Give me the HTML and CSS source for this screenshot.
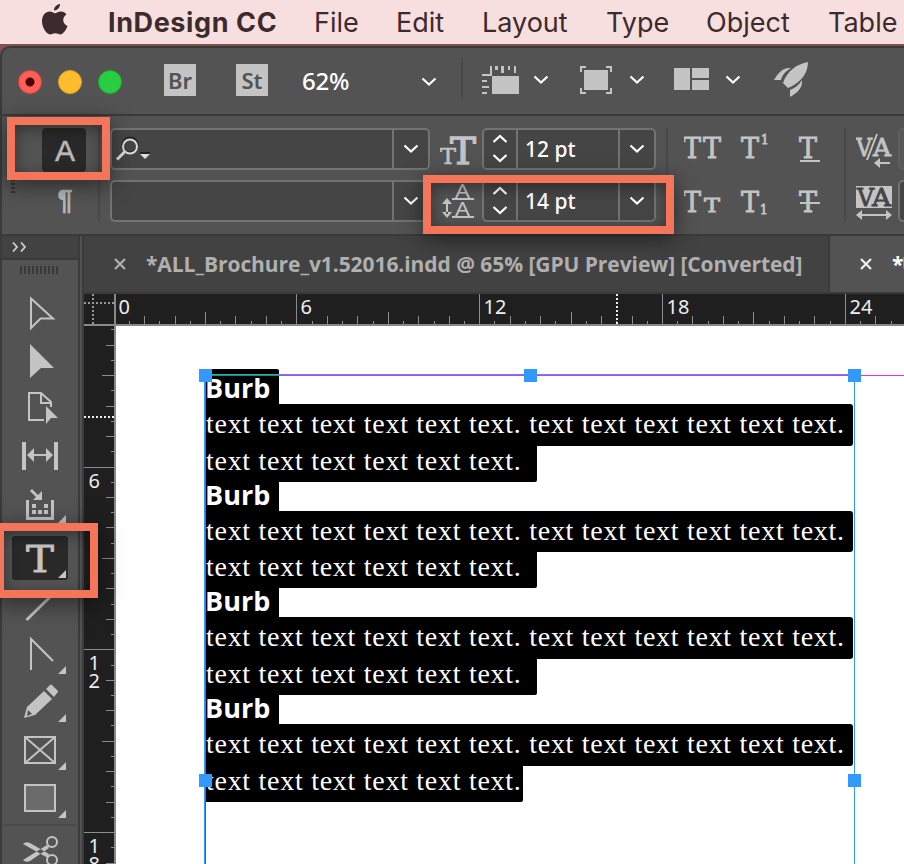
FILE: index.html
```html
<!DOCTYPE html>
<html lang="en">
<head>
    <meta charset="UTF-8">
    <title>InDesign CC</title>
    <link rel="stylesheet" href="styles.css">
</head>
<body>
    <div class="menubar">
        <svg class="apple" width="28" height="34" viewBox="0 0 28 34">
            <path d="M19 1c.3 3-2.800 6.500-6 6.500C12.600 4.500 15.800 1.300 19 1z"/>
            <path d="M14 10.300c1.600 0 3.200-1.700 6-1.700 2.300 0 4.300 1.200 5.500 3-4.900 2.900-4 9.600 1 11.500-1.300 3.600-4.200 8.300-6.900 8.300-2 0-2.800-1.200-5.200-1.200s-3.300 1.200-5.200 1.200C5.700 31.400 1 24.700 1 18.300c0-6 3.600-9.700 7.700-9.700 2.500 0 4 1.700 5.300 1.700z"/>
        </svg>
        <span class="menu app-name">InDesign CC</span>
        <span class="menu file">File</span>
        <span class="menu edit">Edit</span>
        <span class="menu layout">Layout</span>
        <span class="menu type">Type</span>
        <span class="menu object">Object</span>
        <span class="menu table">Table</span>
    </div>

    <div class="desktop">
    <div class="window">
        <div class="appbar">
            <div class="lights">
                <span class="light red"></span>
                <span class="light yellow"></span>
                <span class="light green"></span>
            </div>
            <span class="badge">Br</span>
            <span class="badge">St</span>
            <span class="zoom">62%</span>
            <svg class="chev" width="16" height="10" viewBox="0 0 16 10"><path d="M1.500 1.500L8 7.500l6.500-6"/></svg>
            <span class="sep"></span>
            <svg class="icon rulers" width="37" height="28" viewBox="0 0 37 28">
                <path d="M10 10h27v18H10zM8 0h2v10H0V8h8zM13 0h3v4h-3zM19 0h3v7h-3zM26 0h2v4h-2zM32 0h2v7h-2zM0 14h5v2H0zM0 20h7v2H0zM0 26h5v2H0z"/>
            </svg>
            <svg class="chev" width="16" height="10" viewBox="0 0 16 10"><path d="M1.500 1.500L8 7.500l6.500-6"/></svg>
            <svg class="icon screen" width="33" height="28" viewBox="0 0 33 28">
                <path d="M4 4h24v20H4zM0 0h6v2H2v4H0zM26 0h6v6h-2V2h-4zM0 22h2v4h4v2H0zM30 22h2v6h-6v-2h4z"/>
            </svg>
            <svg class="chev" width="16" height="10" viewBox="0 0 16 10"><path d="M1.500 1.500L8 7.500l6.500-6"/></svg>
            <svg class="icon arrange" width="35" height="22" viewBox="0 0 35 22">
                <path d="M0 0h16v22H0zM18 0h17v10H18zM18 12h17v10H18z"/>
            </svg>
            <svg class="chev" width="16" height="10" viewBox="0 0 16 10"><path d="M1.500 1.500L8 7.500l6.500-6"/></svg>
            <svg class="icon rocket" width="35" height="35" viewBox="0 0 35 35">
                <path d="M34 0C23 2 13 9 9 21l5 5C26 21 34 12 34 0zM17 6C9 5 4 11 0 18h7c1-5 5-9 10-12zM28 18c-3 5-7 8-12 10v7c7-4 13-9 12-17z"/>
            </svg>
        </div>

        <div class="control">
            <div class="modes">
                <span class="grip"></span>
                <div class="mode-list">
                    <span class="mode on">A</span>
                    <span class="mode para">¶</span>
                </div>
            </div>
            <span class="line"></span>
            <div class="fonts">
                <div class="field">
                    <svg width="38" height="28" viewBox="0 0 38 28">
                        <g fill="none" stroke="#222"><circle cx="15" cy="9" r="7.500" stroke-width="2"/></g>
                        <g fill="none" stroke="#ddd"><circle cx="15" cy="10.500" r="7" stroke-width="2"/><path d="M9.500 16L2 23.500" stroke-width="3"/></g>
                        <path d="M25 16h10v2H25z" fill="#222"/><path d="M25 18h10l-5 5z" fill="#ddd"/>
                    </svg>
                    <span class="drop"><svg class="chev" width="16" height="10" viewBox="0 0 16 10"><path d="M1.500 1.500L8 7.500l6.500-6"/></svg></span>
                </div>
                <div class="field">
                    <span class="drop"><svg class="chev" width="16" height="10" viewBox="0 0 16 10"><path d="M1.500 1.500L8 7.500l6.500-6"/></svg></span>
                </div>
            </div>
            <div class="sizes">
                <div class="size-row">
                    <svg class="glyph" width="38" height="42" viewBox="0 0 38 42">
                        <text x="0" y="36" font-size="22" textLength="16" lengthAdjust="spacingAndGlyphs" stroke-width=".5">T</text>
                        <text x="10" y="36" font-size="38" textLength="26" lengthAdjust="spacingAndGlyphs" stroke-width="1.300">T</text>
                    </svg>
                    <div class="field">
                        <span class="spin">
                            <svg class="chev" width="16" height="10" viewBox="0 0 16 10"><path d="M1.500 8L8 2l6.500 6"/></svg>
                            <svg class="chev" width="16" height="10" viewBox="0 0 16 10"><path d="M1.500 2L8 8l6.500-6"/></svg>
                        </span>
                        <span class="value">12 pt</span>
                        <span class="drop"><svg class="chev" width="16" height="10" viewBox="0 0 16 10"><path d="M1.500 1.500L8 7.500l6.500-6"/></svg></span>
                    </div>
                </div>
                <div class="size-row">
                    <svg class="glyph sans" width="38" height="42" viewBox="0 0 38 42">
                        <text x="15" y="18" font-size="20" textLength="15" lengthAdjust="spacingAndGlyphs">A</text>
                        <text x="15" y="36" font-size="20" textLength="15" lengthAdjust="spacingAndGlyphs">A</text>
                        <path d="M12 18h22v2H12zM12 36h22v2H12zM6 22h2v12H6zM7 18l5 6H2zM7 38l5-6H2z"/>
                    </svg>
                    <div class="field">
                        <span class="spin">
                            <svg class="chev" width="16" height="10" viewBox="0 0 16 10"><path d="M1.500 8L8 2l6.500 6"/></svg>
                            <svg class="chev" width="16" height="10" viewBox="0 0 16 10"><path d="M1.500 2L8 8l6.500-6"/></svg>
                        </span>
                        <span class="value">14 pt</span>
                        <span class="drop"><svg class="chev" width="16" height="10" viewBox="0 0 16 10"><path d="M1.500 1.500L8 7.500l6.500-6"/></svg></span>
                    </div>
                </div>
            </div>
            <span class="line"></span>
            <svg class="glyph case" width="138" height="94" viewBox="0 0 138 94">
                <text x="-1" y="30" font-size="27">T</text><text x="19" y="30" font-size="27">T</text>
                <text x="57" y="30" font-size="27">T</text><text x="77" y="16" font-size="12">1</text>
                <text x="115" y="30" font-size="27">T</text>
                <text x="-1" y="84" font-size="27">T</text><text x="20" y="84" font-size="19" textLength="16" lengthAdjust="spacingAndGlyphs">T</text>
                <text x="57" y="84" font-size="27">T</text><text x="76" y="86" font-size="12">1</text>
                <text x="115" y="84" font-size="27">T</text>
                <path d="M116 32h20v2h-20zM116 74h20v2h-20z"/>
            </svg>
            <span class="line"></span>
            <svg class="glyph kern" width="38" height="94" viewBox="0 0 38 94">
                <text x="0" y="28" font-size="25" textLength="16" lengthAdjust="spacingAndGlyphs">V</text>
                <text x="17" y="28" font-size="25" textLength="18" lengthAdjust="spacingAndGlyphs">A</text>
                <path d="M20 6h2L12 32h-2zM18 35l6-5v4h10v2H24v4z"/>
                <path d="M0 58h36v22H0zM0 87l6-5v4h24v-4l6 5-6 5v-4H6v4z"/>
                <g class="dark">
                    <text x="1" y="78" font-size="25" textLength="17" lengthAdjust="spacingAndGlyphs">V</text>
                    <text x="16" y="78" font-size="25" textLength="19" lengthAdjust="spacingAndGlyphs">A</text>
                </g>
            </svg>
            <div class="fonts last">
                <div class="field dim"></div>
                <div class="field"></div>
            </div>
        </div>

        <div class="main">
            <div class="tools">
                <div class="tools-head">
                    <svg width="14" height="10" viewBox="0 0 14 10"><path d="M1 .5l4 4.500-4 4.500M9 .5l4 4.500-4 4.500" fill="none" stroke="#ccc" stroke-width="1.800"/></svg>
                </div>
                <div class="tools-grip"></div>
                <svg class="tool" viewBox="0 0 76 48"><path class="o" d="M29 9.500V39l9.500-9.500H51z"/></svg>
                <svg class="tool" viewBox="0 0 76 48"><path d="M28 7v34l11-10h13z"/></svg>
                <svg class="tool" viewBox="0 0 76 48"><path class="o" d="M42 35H27V8h12l10 9v5M39 8v10h10"/><path d="M44 21v18l5-6h7z"/></svg>
                <svg class="tool" viewBox="0 0 76 48"><path d="M20 9h4v28h-4zM52 9h4v28h-4zM25 22l7-7v6h12v-6l7 7-7 7v-6H32v6z"/></svg>
                <svg class="tool" viewBox="0 0 76 48"><path d="M24 19h3v17h22V19h3v20H24zM30 23h4v4h-4zM42 23h4v4h-4zM30 29h4v4h-4zM36 29h4v4h-4zM42 29h4v4h-4zM30 8l6 6 4-4v9h-9l3-3-6-6zM64 34v8h-8z"/></svg>
                <div class="tools-gap"></div>
                <svg class="tool glyph" viewBox="0 0 76 48">
                    <rect x="10" y="2" width="56" height="44" rx="3" fill="#292929"/>
                    <text x="24" y="38" font-size="38" textLength="28" lengthAdjust="spacingAndGlyphs" stroke-width=".8">T</text>
                    <path d="M64 36v8h-8z"/>
                </svg>
                <svg class="tool" viewBox="0 0 76 48"><path class="o thick" d="M24.500 38L49 14"/></svg>
                <svg class="tool" viewBox="0 0 76 48"><path class="o" d="M29 40V9l22 22"/><path d="M64 36v8h-8z"/></svg>
                <svg class="tool" viewBox="0 0 76 48"><path d="M22 40l3-11 17-16 8 8-17 16zM44 11l4-4q1-1 2 0l5.500 5.500q1 1 0 2L52 19zM64 36v8h-8z"/><path d="M26 32l-1 6 5-2z" fill="#535353"/></svg>
                <svg class="tool" viewBox="0 0 76 48"><path class="o" d="M23 11h30v26H23zM23 11l30 26M53 11L23 37"/><path d="M64 36v8h-8z"/></svg>
                <svg class="tool" viewBox="0 0 76 48"><path class="o box" d="M23 11h30v26H23z"/><path d="M64 36v8h-8z"/></svg>
                <div class="tools-line"></div>
                <svg class="tool" viewBox="0 0 76 48"><g class="o"><circle cx="50" cy="14" r="5"/><circle cx="50" cy="32" r="5"/></g><path d="M21 16q3-3 7-1l19 11-1 4zM21 32q3 3 7 1l19-13-2-3z"/></svg>
            </div>

            <div class="doc">
                <div class="tabs">
                    <div class="tab">
                        <svg width="12" height="12" viewBox="0 0 12 12"><path d="M1 1l10 10M11 1L1 11"/></svg>
                        <span class="tab-title">*ALL_Brochure_v1.52016.indd @ 65% [GPU Preview] [Converted]</span>
                    </div>
                    <div class="tab active">
                        <svg width="12" height="12" viewBox="0 0 12 12"><path d="M1 1l10 10M11 1L1 11"/></svg>
                        <span class="tab-title">*U</span>
                    </div>
                </div>
                <div class="sheet">
                    <svg class="corner" width="30" height="30" viewBox="0 0 30 30"><path d="M9 0v30M0 9h30"/></svg>
                    <svg class="ruler h" id="rulerH" width="788" height="30"></svg>
                    <svg class="ruler v" id="rulerV" width="30" height="538"></svg>
                    <div class="page">
                        <div class="story">
                            <p class="sel head first">Burb</p>
                            <p class="sel full">text text text text text text. text text text text text text.</p>
                            <p class="sel rest">text text text text text text.</p>
                            <p class="sel head">Burb</p>
                            <p class="sel full">text text text text text text. text text text text text text.</p>
                            <p class="sel rest">text text text text text text.</p>
                            <p class="sel head">Burb</p>
                            <p class="sel full">text text text text text text. text text text text text text.</p>
                            <p class="sel rest">text text text text text text.</p>
                            <p class="sel head">Burb</p>
                            <p class="sel full">text text text text text text. text text text text text text.</p>
                            <p class="sel rest end">text text text text text text.</p>
                        </div>
                        <!-- text frame outline and handles over the story -->
                        <svg class="frame" width="788" height="538" viewBox="116 326 788 538" shape-rendering="crispEdges">
                            <path fill="#ee2fe6" d="M205 375h699v1H205z"/>
                            <path fill="#8a2be2" d="M205 800h1v64h-1z"/>
                            <path fill="#11a52a" d="M205 375h74v1h-74zM205 375h1v426h-1z"/>
                            <path fill="#3399ff" d="M204 374h651v1H204zM204 374h1v490h-1zM854 374h1v490h-1z"/>
                            <path fill="#3399ff" d="M199 369h13v13h-13zM524 369h13v13h-13zM848 369h13v13h-13zM199 774h13v13h-13zM848 774h13v13h-13z"/>
                        </svg>
                    </div>
                </div>
            </div>
        </div>
    </div>
    </div>

    <div class="callout character"></div>
    <div class="callout leading"></div>
    <div class="callout type-tool"></div>

    <script>
        const STEP = 182.8 / 12;

        function tickLength(i) {
            if (i % 12 === 0) return 30;
            if (i % 6 === 0) return 12;
            return i % 2 === 0 ? 8 : 3;
        }

        // start is the offset of the zero mark from the start of the ruler
        function drawRuler(id, start, size, vertical, marker) {
            let out = "";
            for (let i = 0; i < 60; i++) {
                const p = Math.floor(start + i * STEP);
                if (p < -5 || p > size) continue;
                const len = tickLength(i);
                if (vertical) {
                    out += `<rect x="${30 - len}" y="${p}" width="${len}" height="1"/>`;
                } else {
                    out += `<rect x="${p}" y="${30 - len}" width="1" height="${len}"/>`;
                }
                if (i % 12 === 0) {
                    const label = String(i / 2);
                    if (vertical) {
                        label.split("").forEach((c, n) => {
                            out += `<text x="4.500" y="${p + 21 + n * 18}">${c}</text>`;
                        });
                    } else {
                        out += `<text x="${p + 4.5}" y="20">${label}</text>`;
                    }
                }
            }
            out += vertical ? `<path d="M0 ${marker}h30"/>` : `<path d="M${marker} 0v30"/>`;
            document.getElementById(id).innerHTML = out;
        }

        drawRuler("rulerH", -1.9, 788, false, 501);
        drawRuler("rulerV", -41.8, 538, true, 91);
    </script>
</body>
</html>
```
FILE: styles.css
```css
*{
    margin: 0;
    padding: 0;
    box-sizing: border-box;
}
body{
    width: 904px;
    height: 864px;
    overflow: hidden;
    position: relative;
    font-family: "Noto Sans", "Open Sans", sans-serif;
    background-color: #84504f;
}
svg{
    display: block;
    flex: none;
}
.menubar{
    display: flex;
    height: 44px;
    padding-left: 41px;
    background-color: #f7dfdf;
    color: #3d2a2d;
    font-family: Inter, "Liberation Sans", sans-serif;
    font-size: 27px;
    line-height: 45px;
    white-space: nowrap;
}
.apple{
    margin: 3px 0 0 0;
    fill: #3d2a2d;
}
.menu{
    flex: none;
}
.app-name{
    width: 206px;
    margin-left: 39px;
    font-weight: 700;
    letter-spacing: 0.6px;
}
.file{
    width: 82px;
}
.edit{
    width: 86px;
}
.layout{
    width: 124px;
}
.type{
    width: 100px;
}
.object{
    width: 122px;
}

/* window */
.desktop{
    padding-top: 2px;
}
.window{
    height: 818px;
    border-left: 2px solid #3a3a3a;
    border-top: 2px solid #3a3a3a;
    border-top-left-radius: 10px;
    background-color: #535353;
    overflow: hidden;
}
.appbar{
    display: flex;
    align-items: flex-start;
    height: 68px;
    padding: 16px 0 0 16px;
    border-bottom: 2px solid #3a3a3a;
}
.lights{
    display: flex;
    gap: 16px;
    margin-top: 6px;
    margin-right: 42px;
}
.light{
    width: 24px;
    height: 24px;
    border-radius: 50%;
}
.red{
    background: radial-gradient(circle, #4d0000 4px, #ff5f57 5px);
    border: 1px solid #e0443e;
}
.yellow{
    background-color: #ffbd2e;
    border: 1px solid #dea123;
}
.green{
    background-color: #28cd41;
    border: 1px solid #24a835;
}
.badge{
    width: 32px;
    height: 32px;
    margin-right: 40px;
    background-color: #c4c4c4;
    color: #535353;
    font-size: 22px;
    font-weight: 600;
    line-height: 32px;
    text-align: center;
}
.zoom{
    width: 118px;
    margin-left: -6px;
    color: #fff;
    font-size: 24px;
    font-weight: 500;
    letter-spacing: -0.2px;
    line-height: 34px;
}
.chev{
    fill: none;
    stroke: #fff;
    stroke-width: 2.2;
}
.appbar .chev{
    margin-top: 11px;
}
.zoom + .chev{
    margin-top: 13px;
    margin-left: 1px;
}
.sep{
    width: 2px;
    height: 40px;
    margin: -6px 19px 0 24px;
    background-color: #494949;
}
.icon{
    fill: #c4c4c4;
}
.rulers{
    margin: 2px 14px 0 0;
}
.screen{
    margin: 2px 16px 0 31px;
}
.arrange{
    margin: 4px 16px 0 29px;
}
.rocket{
    margin: -2px 0 0 33px;
}

/* control panel */
.control{
    display: flex;
    height: 120px;
    padding-top: 12px;
    border-bottom: 2px solid #3a3a3a;
}
.modes{
    display: flex;
    width: 96px;
    flex: none;
}
.grip{
    width: 4px;
    height: 15px;
    margin: 51px 27px 0 9px;
    background: repeating-linear-gradient(#333 0 2px, transparent 2px 4px);
}
.mode{
    display: block;
    width: 44px;
    height: 44px;
    padding-left: 2px;
    color: #b8b8b8;
    font-family: "Liberation Sans", sans-serif;
    font-size: 30px;
    line-height: 46px;
    text-align: center;
    border-radius: 4px;
    -webkit-text-stroke: 0.5px #b8b8b8;
}
.mode.on{
    background-color: #292929;
}
.mode.para{
    margin-top: 4px;
    font-size: 27px;
    font-weight: 700;
    line-height: 49px;
}
.line{
    flex: none;
    width: 2px;
    height: 94px;
    background-color: #494949;
}
.fonts{
    width: 320px;
    flex: none;
    margin-left: 10px;
    display: flex;
    flex-direction: column;
    gap: 10px;
}
.field{
    display: flex;
    height: 42px;
    border: 2px solid #737373;
    border-radius: 5px;
    background-color: #454545;
}
.field > svg{
    margin: 6px 0 0 3px;
}
.drop{
    display: flex;
    align-items: center;
    justify-content: center;
    width: 36px;
    margin-left: auto;
    border-left: 2px solid #737373;
}
.sizes{
    display: flex;
    flex-direction: column;
    gap: 10px;
    margin-left: 10px;
    margin-right: 10px;
}
.size-row{
    display: flex;
    gap: 4px;
}
.size-row .field{
    width: 174px;
}
.spin{
    display: flex;
    flex-direction: column;
    align-items: center;
    justify-content: space-between;
    width: 34px;
    padding: 4px 0 5px;
    border-right: 2px solid #737373;
}
.value{
    padding-left: 7px;
    color: #fff;
    font-size: 21px;
    font-weight: 500;
    line-height: 38px;
}
.glyph{
    fill: #c4c4c4;
    font-family: "DejaVu Serif", serif;
}
.glyph text{
    stroke: #c4c4c4;
}
.case text, .kern text{
    stroke-width: 0.8;
}
.glyph.sans text{
    stroke: none;
}
.glyph.sans{
    font-family: "Noto Sans", sans-serif;
}
.case{
    margin: 0 22px 0 16px;
}
.kern{
    margin-left: 10px;
}
.kern .dark{
    fill: #454545;
}
.kern .dark text{
    stroke: #454545;
}
.fonts.last{
    width: 30px;
    margin-left: 4px;
}
.field.dim{
    background-color: #585858;
    border-color: #5f5f5f;
}

/* toolbox */
.main{
    display: flex;
    height: 628px;
}
.tools{
    width: 82px;
    flex: none;
    border-right: 6px solid #3a3a3a;
    border-right-style: double;
    background-color: #535353;
    background-clip: padding-box;
    overflow: hidden;
}
.tools-head{
    height: 24px;
    padding: 6px 0 0 10px;
    background-color: #424242;
    border-bottom: 2px solid #3a3a3a;
}
.tools-grip{
    width: 38px;
    height: 8px;
    margin: 6px 0 15px 18px;
    background: repeating-linear-gradient(90deg, #3a3a3a 0 2px, transparent 2px 4px);
}
.tool{
    width: 76px;
    height: 48px;
    fill: #c4c4c4;
}
.tool .o{
    fill: none;
    stroke: #c4c4c4;
    stroke-width: 2;
}
.tool .thick{
    stroke-width: 3;
}
.tool .box{
    fill: #6b6b6b;
}
.tools-gap{
    height: 5px;
}
.tools-line{
    height: 2px;
    margin: 2px;
    background-color: #494949;
}

/* document */
.doc{
    flex: 1;
    min-width: 0;
}
.tabs{
    display: flex;
    height: 58px;
    border-bottom: 2px solid #3a3a3a;
    background-color: #424242;
    overflow: hidden;
}
.tab{
    display: flex;
    flex: none;
    align-items: center;
    gap: 20px;
    width: 746px;
    padding-left: 30px;
    border-right: 2px solid #3a3a3a;
    color: #b0b0b0;
    font-family: "Open Sans", sans-serif;
    font-size: 21px;
    font-weight: 700;
    letter-spacing: -0.07px;
    white-space: nowrap;
}
.tab svg{
    stroke: #b0b0b0;
    stroke-width: 2.2;
}
.tab.active{
    width: 100px;
    background-color: #535353;
    color: #fff;
    letter-spacing: -1.5px;
}
.tab.active svg{
    stroke: #f0f0f0;
}
.sheet{
    display: grid;
    grid-template-columns: 32px 788px;
    grid-template-rows: 32px 538px;
    background-color: #888;
}
.corner, .ruler{
    background-color: #1f1f1f;
}
.corner path, .ruler path{
    fill: none;
    stroke: #999;
    stroke-width: 2;
    stroke-dasharray: 2 2;
}
.ruler{
    fill: #8c8c8c;
    overflow: hidden;
}
.ruler path{
    stroke: #eee;
}
.ruler text{
    fill: #eee;
    font-size: 20px;
}
.page{
    position: relative;
    height: 538px;
    padding: 43px 0 0 90px;
    background-color: #fff;
}
.sel{
    background-color: #000;
    color: #fff;
    font-family: "Liberation Serif", serif;
    font-size: 28px;
    letter-spacing: 0.72px;
    white-space: nowrap;
}
.head{
    width: 73px;
    height: 29px;
    font-family: "Open Sans", sans-serif;
    font-size: 27px;
    font-weight: 700;
    letter-spacing: 0;
    line-height: 25px;
    text-indent: -1px;
}
.first{
    height: 35px;
    padding-top: 6px;
    border-top-right-radius: 2px;
}
.full{
    width: 647px;
    height: 41.7px;
    line-height: 40px;
    border-radius: 0 3px 3px 0;
}
.rest{
    width: 331px;
    height: 36px;
    line-height: 29px;
    border-bottom-right-radius: 2px;
}
.end{
    width: 317px;
}
.frame{
    position: absolute;
    left: 0;
    top: 0;
}

/* highlight boxes */
.callout{
    position: absolute;
    border: 8px solid #f4755a;
    box-shadow: 0 5px 22px rgba(0, 0, 0, 0.5), inset 0 4px 16px rgba(0, 0, 0, 0.4);
}
.character{
    left: 7px;
    top: 117px;
    width: 103px;
    height: 63px;
}
.leading{
    left: 423px;
    top: 175px;
    width: 251px;
    height: 59px;
}
.type-tool{
    left: -4px;
    top: 523px;
    width: 102px;
    height: 75px;
}
```
